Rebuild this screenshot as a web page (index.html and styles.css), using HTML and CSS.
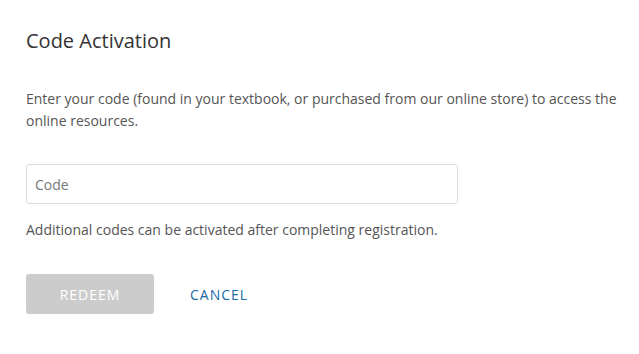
FILE: index.html
```html
<!DOCTYPE html>
<html lang="en">
<head>
  <meta charset="UTF-8" />
  <title>Code Activation</title>
  <link rel="stylesheet" href="styles.css">
</head>
<body>
  <div class="panel">
    <h2 class="title">Code Activation</h2>
    <p class="intro">Enter your code (found in your textbook, or purchased from our online store) to access the online resources.</p>
    <input class="code-input" type="text" placeholder="Code">
    <p class="note">Additional codes can be activated after completing registration.</p>
    <div class="actions">
      <button class="btn-redeem" disabled>REDEEM</button>
      <a class="btn-cancel" href="#">CANCEL</a>
    </div>
  </div>
</body>
</html>
```

FILE: styles.css
```css
body {
  margin: 0;
  background: #fff;
  font-family: "Open Sans", Arial, sans-serif;
  color: #555;
}
.panel {
  padding: 28px 12px 28px 26px;
}
.title {
  margin: 0;
  font-size: 20px;
  font-weight: 400;
  color: #333;
  line-height: 26px;
}
.intro {
  margin: 34px 0 0;
  font-size: 14px;
  line-height: 22px;
  color: #555;
}
.code-input {
  display: block;
  margin-top: 32px;
  width: 432px;
  height: 40px;
  box-sizing: border-box;
  border: 1px solid #ddd;
  border-radius: 3px;
  padding: 0 8px;
  font-family: inherit;
  font-size: 14px;
  color: #333;
}
.code-input::placeholder {
  color: #777;
}
.note {
  margin: 15px 0 0;
  font-size: 14px;
  line-height: 22px;
}
.actions {
  display: flex;
  align-items: center;
  margin-top: 33px;
}
.btn-redeem {
  width: 128px;
  height: 40px;
  border: 0;
  border-radius: 3px;
  background: #ccc;
  color: #fff;
  font-family: inherit;
  font-size: 14px;
  letter-spacing: 1px;
}
.btn-cancel {
  margin-left: 36px;
  color: #1a6aa5;
  font-size: 14px;
  letter-spacing: 1px;
  text-decoration: none;
}
```
